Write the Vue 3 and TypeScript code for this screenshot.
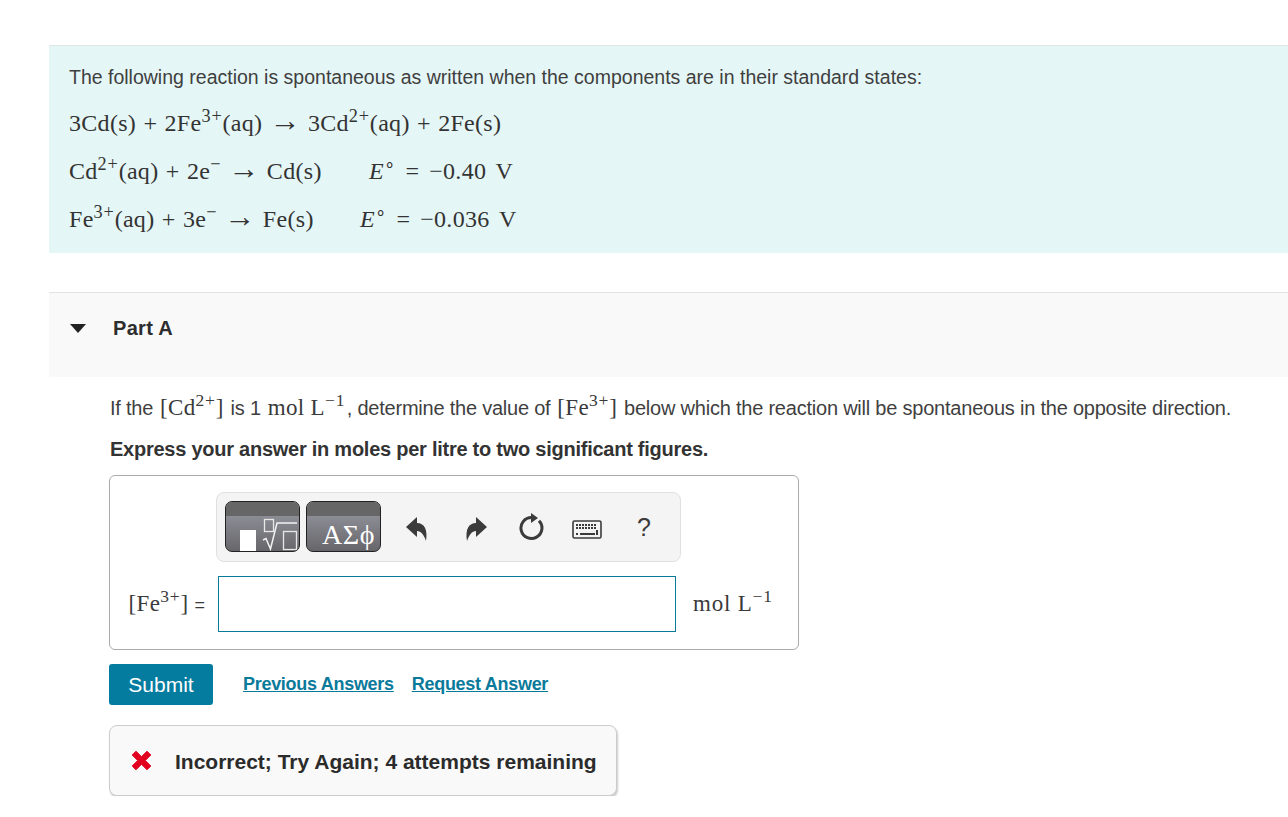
<script setup lang="ts">
const keyRows: number[][] = [
  [6, 9, 12, 15, 18, 21, 24],
  [6, 9, 12, 15, 18, 21, 24],
]
</script>

<template>
  <main class="page">
    <section class="intro">
      <p class="intro-text">The following reaction is spontaneous as written when the components are in their standard states:</p>
      <p class="eq eq-main">3Cd(s) + 2Fe<sup>3+</sup>(aq) <span class="arr">→</span> 3Cd<sup>2+</sup>(aq) + 2Fe(s)</p>
      <p class="eq eq-half">
        <span class="half half-cd">Cd<sup>2+</sup>(aq) + 2e<sup>−</sup> <span class="arr">→</span> Cd(s)</span>
        <span class="potential"><i>E</i><sup>∘</sup> = −0.40 V</span>
      </p>
      <p class="eq eq-half">
        <span class="half half-fe">Fe<sup>3+</sup>(aq) + 3e<sup>−</sup> <span class="arr">→</span> Fe(s)</span>
        <span class="potential"><i>E</i><sup>∘</sup> = −0.036 V</span>
      </p>
    </section>

    <section class="part">
      <header class="part-head">
        <span class="caret"></span>
        <h2>Part A</h2>
      </header>

      <div class="part-body">
        <p class="question">
          If the <span class="m">[Cd<sup>2+</sup>]</span> is 1 <span class="m">mol L<sup>−1</sup></span>, determine the value of
          <span class="m">[Fe<sup>3+</sup>]</span> below which the reaction will be spontaneous in the opposite direction.
        </p>
        <p class="instruction">Express your answer in moles per litre to two significant figures.</p>

        <div class="answer-box">
          <div class="toolbar">
            <button class="tpl-btn" type="button">
              <span class="tpl-band"></span>
              <span class="tpl-face">
                <svg width="73" height="35" viewBox="0 0 73 35">
                  <rect x="14" y="14" width="16" height="21" fill="#fff" />
                  <rect x="38.5" y="3.5" width="9" height="12" fill="none" stroke="#e8e8e8" stroke-width="1.3" />
                  <path d="M37 24l3-1.5 4.5 10.5 6.5-26H71" fill="none" stroke="#f2f2f2" stroke-width="1.5" />
                  <rect x="57.5" y="15.5" width="13" height="18" fill="none" stroke="#e8e8e8" stroke-width="1.3" />
                </svg>
              </span>
            </button>
            <button class="tpl-btn" type="button">
              <span class="tpl-band"></span>
              <span class="tpl-face tpl-greek">ΑΣϕ</span>
            </button>

            <svg class="tool tool-undo" width="22" height="24" viewBox="0 0 22 24">
              <path d="M0 10 11 0v6c7 0 11 6 9 18-2-6-5-10-9-10v6z" fill="#3b3b3b" />
            </svg>
            <svg class="tool tool-redo" width="22" height="24" viewBox="0 0 22 24">
              <path d="M22 10 11 0v6C4 6 0 12 2 24c2-6 5-10 9-10v6z" fill="#3b3b3b" />
            </svg>
            <svg class="tool tool-reset" width="26" height="28" viewBox="0 0 26 28">
              <path d="M12.5 4.5A10.5 10.5 0 1 0 20 7.7" fill="none" stroke="#3b3b3b" stroke-width="3" />
              <path d="M12 0l7 5-7 5z" fill="#3b3b3b" />
            </svg>
            <svg class="tool tool-keys" width="30" height="19" viewBox="0 0 30 19">
              <rect x="1" y="1" width="28" height="17" rx="1.5" fill="#f4f4f4" stroke="#3b3b3b" stroke-width="1.6" />
              <g v-for="(row, r) in keyRows" :key="r">
                <rect v-for="x in row" :key="x" :x="x - 2" :y="4 + r * 3" width="2" height="2" fill="#3b3b3b" />
              </g>
              <rect x="4" y="13" width="2" height="2" fill="#3b3b3b" />
              <rect x="8" y="13" width="15" height="2" fill="#3b3b3b" />
              <rect x="24" y="10" width="2" height="5" fill="#3b3b3b" />
            </svg>
            <span class="tool-help">?</span>
          </div>

          <div class="answer-row">
            <span class="answer-label"><span class="m">[Fe<sup>3+</sup>]</span> <span class="equals">=</span></span>
            <input class="answer-input" type="text" />
            <span class="m answer-unit">mol L<sup>−1</sup></span>
          </div>
        </div>

        <div class="actions">
          <button class="submit" type="button">Submit</button>
          <a class="link link-prev" href="#">Previous Answers</a>
          <a class="link" href="#">Request Answer</a>
        </div>

        <div class="feedback">
          <svg width="21" height="21" viewBox="0 0 21 21">
            <path d="M5 1.2 10.5 6.7 16 1.2 19.8 5 14.3 10.5 19.8 16 16 19.8 10.5 14.3 5 19.8 1.2 16 6.7 10.5 1.2 5z" fill="#e2001f" stroke="#e2001f" stroke-linejoin="round" />
          </svg>
          <span>Incorrect; Try Again; 4 attempts remaining</span>
        </div>
      </div>
    </section>
  </main>
</template>

<style>
html,
body {
  margin: 0;
  background: #fff;
  overflow-x: hidden;
}
</style>

<style scoped>
.page {
  padding: 45px 0 0 49px;
  font-family: "Liberation Sans", Arial, sans-serif;
  color: #3f3f3f;
}

p {
  margin: 0;
}

sup {
  font-size: 0.76em;
  line-height: 0;
  letter-spacing: 0.8px;
  vertical-align: baseline;
  position: relative;
  top: -0.5em;
}

.intro {
  height: 208px;
  box-sizing: border-box;
  background: #e5f6f6;
  border-top: 1px solid #dfe6e6;
  padding: 19px 20px 0;
}

.intro-text {
  font-size: 19.5px;
  line-height: 24px;
  margin-bottom: 10px;
}

.eq {
  font-family: "Liberation Serif", "Times New Roman", serif;
  font-size: 24px;
  line-height: 48px;
  letter-spacing: 0.3px;
  word-spacing: 1px;
  color: #333;
}

.arr {
  font-size: 31px;
  line-height: 0;
  letter-spacing: 0;
}

.eq-half {
  display: flex;
}

.half-cd {
  width: 300px;
}

.half-fe {
  width: 291px;
}

.potential {
  word-spacing: 3.5px;
}

.part {
  margin-top: 39px;
}

.part-head {
  height: 85px;
  box-sizing: border-box;
  display: flex;
  align-items: center;
  padding: 0 0 14px 21px;
  background: #f9f9f9;
  border-top: 1px solid #e2e2e2;
}

.caret {
  width: 0;
  height: 0;
  border-left: 8px solid transparent;
  border-right: 8px solid transparent;
  border-top: 9px solid #222;
  margin-right: 27px;
}

h2 {
  margin: 0;
  font-size: 20px;
  font-weight: 700;
  letter-spacing: 0.3px;
  color: #2d2d2d;
}

.part-body {
  padding: 18px 0 0 60px;
}

.question {
  padding-left: 1px;
  font-size: 20px;
  line-height: 26px;
  white-space: nowrap;
  letter-spacing: -0.22px;
}

.m {
  margin: 0 1.5px;
  font-family: "Liberation Serif", "Times New Roman", serif;
  font-size: 23px;
  letter-spacing: 0.35px;
  color: #3a3a3a;
}

.instruction {
  margin-top: 16px;
  padding-left: 1px;
  font-size: 20px;
  line-height: 24px;
  font-weight: 700;
  color: #333;
  letter-spacing: -0.25px;
}

.answer-box {
  width: 690px;
  height: 175px;
  box-sizing: border-box;
  margin-top: 14px;
  border: 1px solid #aaa;
  border-radius: 6px;
  padding: 16px 0 0 17px;
}

.toolbar {
  width: 465px;
  height: 70px;
  box-sizing: border-box;
  margin-left: 89px;
  display: flex;
  align-items: center;
  padding-left: 8px;
  background: #f4f4f4;
  border: 1px solid #e0e0e0;
  border-radius: 8px;
}

.tpl-btn {
  width: 75px;
  height: 51px;
  box-sizing: border-box;
  padding: 0;
  margin-right: 6px;
  margin-top: -2px;
  display: flex;
  flex-direction: column;
  border: 1px solid #222;
  border-radius: 7px;
  overflow: hidden;
  background: linear-gradient(#9b9ba6, #66666a);
}

.tpl-band {
  height: 14px;
  flex: none;
  background: #666;
}

.tpl-face {
  flex: 1;
  display: flex;
  align-items: flex-end;
}

.tpl-greek {
  justify-content: center;
  padding-left: 10px;
  color: #fff;
  font-family: "Liberation Serif", serif;
  font-size: 28px;
  letter-spacing: 0.5px;
  line-height: 32px;
}

.tool {
  flex: none;
}

.tool-undo {
  margin-left: 19px;
  margin-top: 3px;
}

.tool-redo {
  margin-left: 37px;
  margin-top: 3px;
}

.tool-reset {
  margin-left: 32px;
}

.tool-keys {
  margin-left: 27px;
  margin-top: 5px;
}

.tool-help {
  margin-left: 35px;
  font-size: 25px;
  color: #3b3b3b;
}

.answer-row {
  display: flex;
  align-items: center;
  margin-top: 14px;
}

.answer-label {
  width: 91px;
  flex: none;
  white-space: nowrap;
  font-size: 16px;
  color: #3a3a3a;
}

.equals {
  font-size: 18px;
}

.answer-input {
  width: 458px;
  height: 56px;
  box-sizing: border-box;
  border: 1px solid #0a7a9b;
  outline: none;
  background: #fff;
}

.answer-unit {
  margin-left: 17px;
  letter-spacing: 0.8px;
}

.actions {
  display: flex;
  align-items: center;
  margin-top: 14px;
}

.submit {
  width: 104px;
  height: 41px;
  padding: 0;
  border: none;
  border-radius: 3px;
  background: #047c9f;
  color: #fff;
  font-family: inherit;
  font-size: 21px;
}

.link {
  font-size: 18px;
  font-weight: 700;
  color: #0a7a9b;
  letter-spacing: -0.29px;
}

.link-prev {
  margin: 0 18px 0 30px;
}

.feedback {
  width: 508px;
  height: 71px;
  box-sizing: border-box;
  margin-top: 20px;
  display: flex;
  align-items: center;
  gap: 23px;
  padding: 3px 0 0 21px;
  background: #f9f9f9;
  border: 1px solid #ccc;
  border-radius: 8px;
  box-shadow: 1px 2px 2px #ccc;
  font-size: 21px;
  font-weight: 700;
  color: #2b2b2b;
  white-space: nowrap;
}

.feedback svg {
  margin-top: -3px;
}
</style>
